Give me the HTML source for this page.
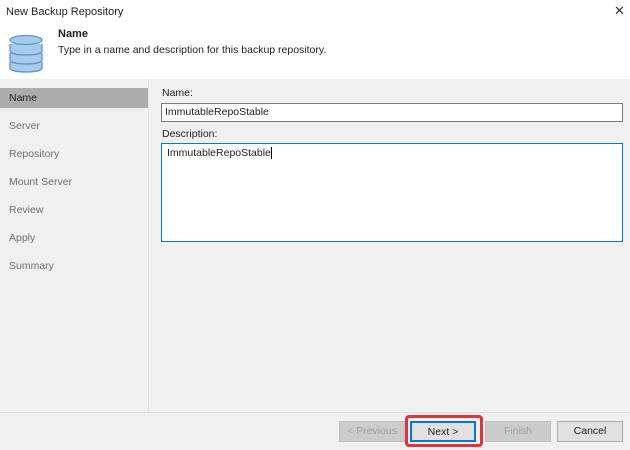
<!DOCTYPE html>
<html><head><style>
*{margin:0;padding:0;box-sizing:border-box}
body{width:630px;height:450px;background:#f0f0f0;font-family:"Liberation Sans",sans-serif;font-size:11px;color:#1e1e1e;position:relative;overflow:hidden}
.a{position:absolute}
.nav{left:0;top:79px;width:149px;height:333px;background:#f0f0f0;border-right:1px solid #e2e2e2}
.item{position:absolute;left:9px;color:#6d6d6d;font-size:10.5px}
.btn{position:absolute;top:421px;height:21px;width:66px;border:1px solid #adadad;background:#e1e1e1;text-align:center;line-height:19px;font-size:10.5px}
</style></head><body>
<div class="a" style="left:0;top:0;width:630px;height:79px;background:#fff"></div>
<div class="a" style="left:6px;top:6px;font-size:11px">New Backup Repository</div>
<div class="a" style="left:614px;top:3px;font-size:13px;color:#333">✕</div>
<svg class="a" style="left:8px;top:33px" width="36" height="40" viewBox="0 0 36 40">
<g fill="#a9cbea" stroke="#5b94c9" stroke-width="1.3">
<path d="M2 29v6c0 2.5 7 4 16 4s16-1.5 16-4v-6"/>
<path d="M2 20v7c0 2.5 7 4 16 4s16-1.5 16-4v-7"/>
<path d="M2 11v7c0 2.5 7 4 16 4s16-1.5 16-4v-7"/>
<ellipse cx="18" cy="7" rx="16" ry="4.5"/>
</g></svg>
<div class="a" style="left:58px;top:28px;font-weight:bold;font-size:11px">Name</div>
<div class="a" style="left:58px;top:44px;font-size:10.5px">Type in a name and description for this backup repository.</div>
<div class="a nav"></div>
<div class="a" style="left:0;top:88px;width:148px;height:20px;background:#acacac"></div>
<div class="item" style="top:92px;color:#222">Name</div>
<div class="item" style="top:120px">Server</div>
<div class="item" style="top:148px">Repository</div>
<div class="item" style="top:176px">Mount Server</div>
<div class="item" style="top:204px">Review</div>
<div class="item" style="top:232px">Apply</div>
<div class="item" style="top:260px">Summary</div>
<div class="a" style="left:162px;top:87px;font-size:10.5px">Name:</div>
<div class="a" style="left:161px;top:103px;width:462px;height:19px;background:#fff;border:1px solid #7a7a7a;padding:2px 3px;font-size:10.5px">ImmutableRepoStable</div>
<div class="a" style="left:162px;top:128px;font-size:10.5px">Description:</div>
<div class="a" style="left:161px;top:143px;width:462px;height:99px;background:#fff;border:1px solid #0078d7;padding:3px 5px;font-size:10.5px">ImmutableRepoStable<span style="border-left:1px solid #000"></span></div>
<div class="a" style="left:0;top:412px;width:630px;height:1px;background:#dcdcdc"></div>
<div class="btn" style="left:339px;color:#a0a0a0;background:#ccc;border-color:#bfbfbf">&lt; Previous</div>
<div class="a" style="left:405px;top:415px;width:78px;height:32px;border:3px solid #e0343c;border-radius:4px"></div>
<div class="btn" style="left:410px;border:2px solid #0078d7">Next &gt;</div>
<div class="btn" style="left:485px;color:#a0a0a0;background:#ccc;border-color:#bfbfbf">Finish</div>
<div class="btn" style="left:557px">Cancel</div>
</body></html>
